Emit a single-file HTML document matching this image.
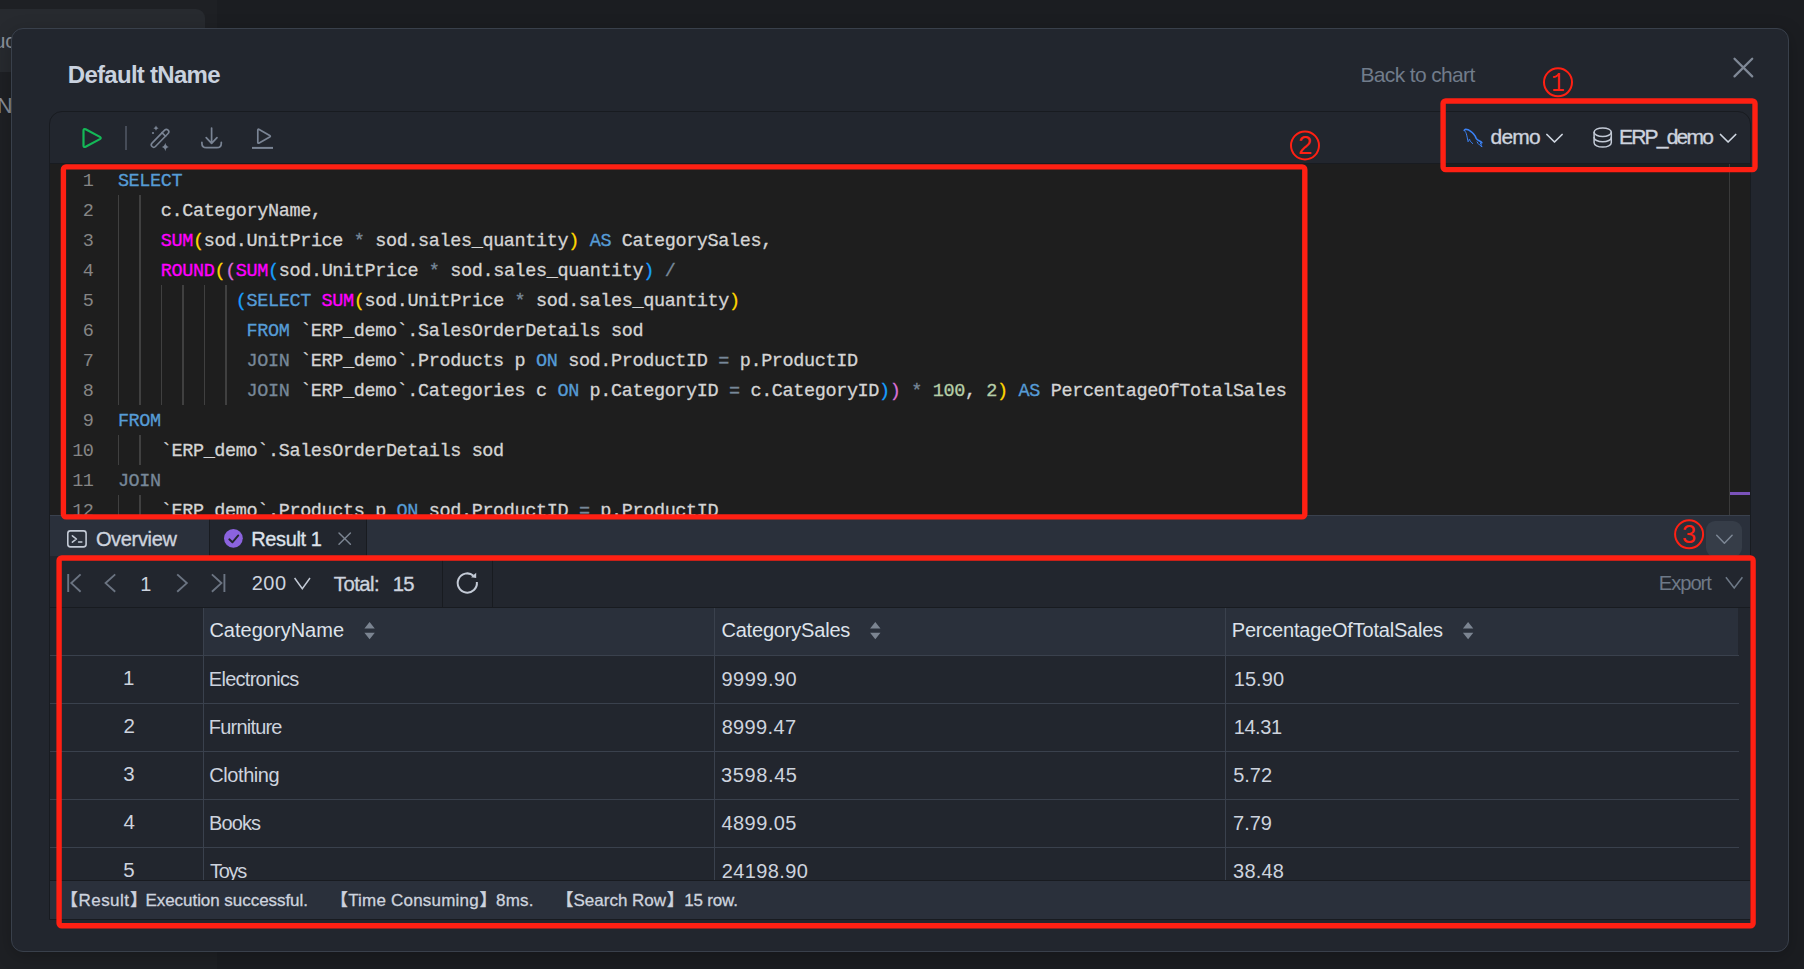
<!DOCTYPE html>
<html lang="en"><head><meta charset="utf-8"><title>Default tName</title>
<style>
*{margin:0;padding:0;box-sizing:border-box}
html,body{width:1804px;height:969px;overflow:hidden;background:#1e2024}
body{position:relative;font-family:"Liberation Sans", "Noto Sans CJK SC", sans-serif;}
.abs,.t,.ln,.cl,.ig,.hl,.vl,.rb,.circ{position:absolute}
.t{line-height:30px;white-space:pre;font-family:"Liberation Sans", "Noto Sans CJK SC", sans-serif}
.ln{left:50px;width:43.6px;text-align:right;height:30px;line-height:30px;font-family:"Liberation Mono", monospace;font-size:18.5px;letter-spacing:-0.382px;color:#858585;white-space:pre}
.cl{left:117.9px;height:30px;line-height:30px;font-family:"Liberation Mono", monospace;font-size:18.5px;letter-spacing:-0.382px;color:#d4d4d4;white-space:pre;-webkit-text-stroke:0.3px}
.ig{width:1.5px;height:30px;background:#404040}
.hl{height:1.5px;background:#3a414d}
.vl{width:1.5px;background:#3a414d}
.rb{border:5.4px solid #ff2013;border-radius:5px;z-index:10}
.circ{color:#ff2013;z-index:11;}
.bl{margin-left:-0.5em;margin-right:0.02em;-webkit-text-stroke:0.5px}.br{margin-right:-0.5em;margin-left:0.05em;-webkit-text-stroke:0.5px}
svg{position:absolute;overflow:visible}
</style></head>
<body>
<div class="abs" style="left:0;top:9px;width:205px;height:63px;background:#272a2f;border-top-right-radius:9px"></div>
<div class="abs" style="left:217px;top:0;width:1587px;height:969px;background:#1b1d21"></div>
<div class="t" style="left:-6.1px;top:25.7px;font-size:20.5px;color:#8c929b">uc</div>
<div class="t" style="left:-3.1px;top:91.1px;font-size:21.5px;color:#878d97">N</div>
<div class="abs" style="left:10.8px;top:28.2px;width:1778.2px;height:923.6px;background:#22262e;border:1.1px solid #39404b;border-radius:12px;box-shadow:0 4px 18px rgba(0,0,0,.22)"></div>
<div class="abs" id="panel" style="left:48.6px;top:110.6px;width:1702.4px;height:809.6px;background:#22262e;border:1.1px solid #181b20;border-radius:13px 13px 0 0;overflow:hidden"></div>
<div class="abs" id="editor" style="left:49.6px;top:163.7px;width:1700.6px;height:351.4px;background:#1e1e1e;overflow:hidden"></div>
<div class="abs" style="left:49.6px;top:162.8px;width:1700.6px;height:1.2px;background:#181b20"></div>
<div class="abs" style="left:1728.9px;top:164px;width:1.1px;height:351px;background:#3a3a3a"></div>
<div class="abs" style="left:1730px;top:492px;width:20.2px;height:2.8px;background:#7b53ba"></div>
<div class="abs" id="codewrap" style="left:0;top:0;width:1804px;height:515px;overflow:hidden"><div class="ln" style="top:166.6px">1</div>
<div class="cl" style="top:166.6px"><span style="color:#569cd6">SELECT</span></div>
<div class="ln" style="top:196.6px">2</div>
<div class="cl" style="top:196.6px"><span style="color:#d4d4d4">    c.CategoryName,</span></div>
<div class="ig" style="left:117.9px;top:195.0px"></div>
<div class="ig" style="left:139.3px;top:195.0px"></div>
<div class="ln" style="top:226.6px">3</div>
<div class="cl" style="top:226.6px"><span style="color:#d4d4d4">    </span><span style="color:#ff00ff">SUM</span><span style="color:#ffd700">(</span><span style="color:#d4d4d4">sod.UnitPrice </span><span style="color:#778899">*</span><span style="color:#d4d4d4"> sod.sales_quantity</span><span style="color:#ffd700">)</span><span style="color:#d4d4d4"> </span><span style="color:#569cd6">AS</span><span style="color:#d4d4d4"> CategorySales,</span></div>
<div class="ig" style="left:117.9px;top:225.0px"></div>
<div class="ig" style="left:139.3px;top:225.0px"></div>
<div class="ln" style="top:256.6px">4</div>
<div class="cl" style="top:256.6px"><span style="color:#d4d4d4">    </span><span style="color:#ff00ff">ROUND</span><span style="color:#ffd700">(</span><span style="color:#da70d6">(</span><span style="color:#ff00ff">SUM</span><span style="color:#179fff">(</span><span style="color:#d4d4d4">sod.UnitPrice </span><span style="color:#778899">*</span><span style="color:#d4d4d4"> sod.sales_quantity</span><span style="color:#179fff">)</span><span style="color:#d4d4d4"> </span><span style="color:#778899">/</span></div>
<div class="ig" style="left:117.9px;top:255.0px"></div>
<div class="ig" style="left:139.3px;top:255.0px"></div>
<div class="ln" style="top:286.6px">5</div>
<div class="cl" style="top:286.6px"><span style="color:#d4d4d4">           </span><span style="color:#179fff">(</span><span style="color:#569cd6">SELECT</span><span style="color:#d4d4d4"> </span><span style="color:#ff00ff">SUM</span><span style="color:#ffd700">(</span><span style="color:#d4d4d4">sod.UnitPrice </span><span style="color:#778899">*</span><span style="color:#d4d4d4"> sod.sales_quantity</span><span style="color:#ffd700">)</span></div>
<div class="ig" style="left:117.9px;top:285.0px"></div>
<div class="ig" style="left:139.3px;top:285.0px"></div>
<div class="ig" style="left:160.8px;top:285.0px"></div>
<div class="ig" style="left:182.2px;top:285.0px"></div>
<div class="ig" style="left:203.7px;top:285.0px"></div>
<div class="ig" style="left:225.1px;top:285.0px"></div>
<div class="ln" style="top:316.6px">6</div>
<div class="cl" style="top:316.6px"><span style="color:#d4d4d4">            </span><span style="color:#569cd6">FROM</span><span style="color:#d4d4d4"> `ERP_demo`.SalesOrderDetails sod</span></div>
<div class="ig" style="left:117.9px;top:315.0px"></div>
<div class="ig" style="left:139.3px;top:315.0px"></div>
<div class="ig" style="left:160.8px;top:315.0px"></div>
<div class="ig" style="left:182.2px;top:315.0px"></div>
<div class="ig" style="left:203.7px;top:315.0px"></div>
<div class="ig" style="left:225.1px;top:315.0px"></div>
<div class="ln" style="top:346.6px">7</div>
<div class="cl" style="top:346.6px"><span style="color:#d4d4d4">            </span><span style="color:#778899">JOIN</span><span style="color:#d4d4d4"> `ERP_demo`.Products p </span><span style="color:#569cd6">ON</span><span style="color:#d4d4d4"> sod.ProductID </span><span style="color:#778899">=</span><span style="color:#d4d4d4"> p.ProductID</span></div>
<div class="ig" style="left:117.9px;top:345.0px"></div>
<div class="ig" style="left:139.3px;top:345.0px"></div>
<div class="ig" style="left:160.8px;top:345.0px"></div>
<div class="ig" style="left:182.2px;top:345.0px"></div>
<div class="ig" style="left:203.7px;top:345.0px"></div>
<div class="ig" style="left:225.1px;top:345.0px"></div>
<div class="ln" style="top:376.6px">8</div>
<div class="cl" style="top:376.6px"><span style="color:#d4d4d4">            </span><span style="color:#778899">JOIN</span><span style="color:#d4d4d4"> `ERP_demo`.Categories c </span><span style="color:#569cd6">ON</span><span style="color:#d4d4d4"> p.CategoryID </span><span style="color:#778899">=</span><span style="color:#d4d4d4"> c.CategoryID</span><span style="color:#179fff">)</span><span style="color:#da70d6">)</span><span style="color:#d4d4d4"> </span><span style="color:#778899">*</span><span style="color:#d4d4d4"> </span><span style="color:#b5cea8">100</span><span style="color:#d4d4d4">, </span><span style="color:#b5cea8">2</span><span style="color:#ffd700">)</span><span style="color:#d4d4d4"> </span><span style="color:#569cd6">AS</span><span style="color:#d4d4d4"> PercentageOfTotalSales</span></div>
<div class="ig" style="left:117.9px;top:375.0px"></div>
<div class="ig" style="left:139.3px;top:375.0px"></div>
<div class="ig" style="left:160.8px;top:375.0px"></div>
<div class="ig" style="left:182.2px;top:375.0px"></div>
<div class="ig" style="left:203.7px;top:375.0px"></div>
<div class="ig" style="left:225.1px;top:375.0px"></div>
<div class="ln" style="top:406.6px">9</div>
<div class="cl" style="top:406.6px"><span style="color:#569cd6">FROM</span></div>
<div class="ln" style="top:436.6px">10</div>
<div class="cl" style="top:436.6px"><span style="color:#d4d4d4">    `ERP_demo`.SalesOrderDetails sod</span></div>
<div class="ig" style="left:117.9px;top:435.0px"></div>
<div class="ig" style="left:139.3px;top:435.0px"></div>
<div class="ln" style="top:466.6px">11</div>
<div class="cl" style="top:466.6px"><span style="color:#778899">JOIN</span></div>
<div class="ln" style="top:496.6px">12</div>
<div class="cl" style="top:496.6px"><span style="color:#d4d4d4">    `ERP_demo`.Products p </span><span style="color:#569cd6">ON</span><span style="color:#d4d4d4"> sod.ProductID </span><span style="color:#778899">=</span><span style="color:#d4d4d4"> p.ProductID</span></div>
<div class="ig" style="left:117.9px;top:495.0px"></div>
<div class="ig" style="left:139.3px;top:495.0px"></div></div>
<div class="abs" style="left:49.6px;top:515px;width:1700.6px;height:40.5px;background:#2a303b;border-top:1px solid #3a414d"></div>
<div class="abs" style="left:208.7px;top:516px;width:158.6px;height:39.7px;background:#22262e;border-left:1.3px solid #181b20;border-right:1.3px solid #181b20"></div>
<div class="abs" style="left:1706px;top:521px;width:36px;height:36px;background:#363d48;border-radius:9px"></div>
<div class="abs" style="left:441.6px;top:560px;width:1.3px;height:47px;background:#181b20"></div>
<div class="abs" style="left:491.6px;top:560px;width:1.3px;height:47px;background:#181b20"></div>
<div class="abs" style="left:203.2px;top:608px;width:1535.3px;height:47.5px;background:#2a303b"></div>
<div class="abs" style="left:49.6px;top:607px;width:1700.6px;height:1.4px;background:#181b20"></div>
<div class="hl" style="left:49.6px;top:654.7px;width:1689px"></div>
<div class="hl" style="left:49.6px;top:702.7px;width:1689px"></div>
<div class="hl" style="left:49.6px;top:750.6px;width:1689px"></div>
<div class="hl" style="left:49.6px;top:798.6px;width:1689px"></div>
<div class="hl" style="left:49.6px;top:846.6px;width:1689px"></div>
<div class="vl" style="left:202.5px;top:608px;height:273px"></div>
<div class="vl" style="left:713.7px;top:608px;height:273px"></div>
<div class="vl" style="left:1224.8px;top:608px;height:273px"></div>
<div class="abs" style="left:49.6px;top:880.3px;width:1700.6px;height:38.6px;background:#2a303b;border-top:1.3px solid #181b20;z-index:5"></div>
<div class="t" id="t0" style="left:67.85px;top:59.58px;font-size:24px;color:#c9d1de;font-weight:700;letter-spacing:-0.724px;">Default tName</div>
<div class="t" id="t1" style="left:1360.45px;top:59.62px;font-size:21px;color:#717c8b;font-weight:400;letter-spacing:-0.640px;">Back to chart</div>
<div class="t" id="t2" style="left:1490.55px;top:122.42px;font-size:21px;color:#cdd3de;font-weight:400;letter-spacing:-0.821px;-webkit-text-stroke:0.35px;">demo</div>
<div class="t" id="t3" style="left:1618.91px;top:122.42px;font-size:21px;color:#cdd3de;font-weight:400;letter-spacing:-1.776px;-webkit-text-stroke:0.35px;">ERP_demo</div>
<div class="t" id="t4" style="left:95.88px;top:523.97px;font-size:20px;color:#cdd3de;font-weight:400;letter-spacing:-0.325px;-webkit-text-stroke:0.35px;">Overview</div>
<div class="t" id="t5" style="left:251.24px;top:523.97px;font-size:20px;color:#dde2ea;font-weight:400;letter-spacing:-0.377px;-webkit-text-stroke:0.35px;">Result 1</div>
<div class="t" id="t6" style="left:140.13px;top:568.87px;font-size:20px;color:#cdd3de;font-weight:400;letter-spacing:0.000px;">1</div>
<div class="t" id="t7" style="left:251.72px;top:568.07px;font-size:20px;color:#cdd3de;font-weight:400;letter-spacing:0.524px;">200</div>
<div class="t" id="t8" style="left:333.87px;top:568.76px;font-size:20.3px;color:#cdd3de;font-weight:400;letter-spacing:-0.521px;-webkit-text-stroke:0.35px;">Total:</div>
<div class="t" id="t9" style="left:392.64px;top:568.76px;font-size:20.3px;color:#cdd3de;font-weight:400;letter-spacing:-0.729px;-webkit-text-stroke:0.35px;">15</div>
<div class="t" id="t10" style="left:1658.84px;top:568.00px;font-size:20.2px;color:#6e7987;font-weight:400;letter-spacing:-1.062px;">Export</div>
<div class="t" id="t11" style="left:209.40px;top:614.57px;font-size:20px;color:#dde2ea;font-weight:400;letter-spacing:0.015px;">CategoryName</div>
<div class="t" id="t12" style="left:721.40px;top:614.57px;font-size:20px;color:#dde2ea;font-weight:400;letter-spacing:-0.184px;">CategorySales</div>
<div class="t" id="t13" style="left:1231.84px;top:614.57px;font-size:20px;color:#dde2ea;font-weight:400;letter-spacing:-0.210px;">PercentageOfTotalSales</div>
<div class="t" id="t14" style="left:123.09px;top:662.79px;font-size:20.5px;color:#cdd3de;font-weight:400;letter-spacing:0.000px;">1</div>
<div class="t" id="t15" style="left:208.87px;top:663.77px;font-size:20px;color:#cdd3de;font-weight:400;letter-spacing:-0.738px;">Electronics</div>
<div class="t" id="t16" style="left:721.43px;top:663.77px;font-size:20px;color:#cdd3de;font-weight:400;letter-spacing:0.505px;">9999.90</div>
<div class="t" id="t17" style="left:1233.71px;top:663.77px;font-size:20px;color:#cdd3de;font-weight:400;letter-spacing:0.084px;">15.90</div>
<div class="t" id="t18" style="left:123.45px;top:710.76px;font-size:20.5px;color:#cdd3de;font-weight:400;letter-spacing:0.000px;">2</div>
<div class="t" id="t19" style="left:208.87px;top:711.74px;font-size:20px;color:#cdd3de;font-weight:400;letter-spacing:-0.809px;">Furniture</div>
<div class="t" id="t20" style="left:721.63px;top:711.74px;font-size:20px;color:#cdd3de;font-weight:400;letter-spacing:0.354px;">8999.47</div>
<div class="t" id="t21" style="left:1233.71px;top:711.74px;font-size:20px;color:#cdd3de;font-weight:400;letter-spacing:-0.422px;">14.31</div>
<div class="t" id="t22" style="left:123.34px;top:758.73px;font-size:20.5px;color:#cdd3de;font-weight:400;letter-spacing:0.000px;">3</div>
<div class="t" id="t23" style="left:209.33px;top:759.71px;font-size:20px;color:#cdd3de;font-weight:400;letter-spacing:-0.440px;">Clothing</div>
<div class="t" id="t24" style="left:721.06px;top:759.71px;font-size:20px;color:#cdd3de;font-weight:400;letter-spacing:0.607px;">3598.45</div>
<div class="t" id="t25" style="left:1233.18px;top:759.71px;font-size:20px;color:#cdd3de;font-weight:400;letter-spacing:0.001px;">5.72</div>
<div class="t" id="t26" style="left:123.50px;top:806.70px;font-size:20.5px;color:#cdd3de;font-weight:400;letter-spacing:0.000px;">4</div>
<div class="t" id="t27" style="left:209.01px;top:807.68px;font-size:20px;color:#cdd3de;font-weight:400;letter-spacing:-0.871px;">Books</div>
<div class="t" id="t28" style="left:721.44px;top:807.68px;font-size:20px;color:#cdd3de;font-weight:400;letter-spacing:0.451px;">4899.05</div>
<div class="t" id="t29" style="left:1233.02px;top:807.68px;font-size:20px;color:#cdd3de;font-weight:400;letter-spacing:-0.010px;">7.79</div>
<div class="t" id="t30" style="left:123.36px;top:854.67px;font-size:20.5px;color:#cdd3de;font-weight:400;letter-spacing:0.000px;">5</div>
<div class="t" id="t31" style="left:209.95px;top:855.65px;font-size:20px;color:#cdd3de;font-weight:400;letter-spacing:-1.247px;">Toys</div>
<div class="t" id="t32" style="left:721.65px;top:855.65px;font-size:20px;color:#cdd3de;font-weight:400;letter-spacing:0.410px;">24198.90</div>
<div class="t" id="t33" style="left:1233.11px;top:855.65px;font-size:20px;color:#cdd3de;font-weight:400;letter-spacing:0.180px;">38.48</div>
<div class="t" id="t34" style="left:69.24px;top:885.71px;font-size:17px;color:#cdd3de;font-weight:400;letter-spacing:0.453px;z-index:6;-webkit-text-stroke:0.3px;"><span class="bl">【</span>Result<span class="br">】</span></div>
<div class="t" id="t35" style="left:145.44px;top:885.71px;font-size:17px;color:#cdd3de;font-weight:400;letter-spacing:-0.046px;z-index:6;-webkit-text-stroke:0.3px;">Execution successful.</div>
<div class="t" id="t36" style="left:339.14px;top:885.71px;font-size:17px;color:#cdd3de;font-weight:400;letter-spacing:0.202px;z-index:6;-webkit-text-stroke:0.3px;"><span class="bl">【</span>Time Consuming<span class="br">】</span></div>
<div class="t" id="t37" style="left:495.91px;top:885.71px;font-size:17px;color:#cdd3de;font-weight:400;letter-spacing:0.284px;z-index:6;-webkit-text-stroke:0.3px;">8ms.</div>
<div class="t" id="t38" style="left:564.68px;top:885.71px;font-size:17px;color:#cdd3de;font-weight:400;letter-spacing:-0.002px;z-index:6;-webkit-text-stroke:0.3px;"><span class="bl">【</span>Search Row<span class="br">】</span></div>
<div class="t" id="t39" style="left:684.19px;top:885.71px;font-size:17px;color:#cdd3de;font-weight:400;letter-spacing:-0.165px;z-index:6;-webkit-text-stroke:0.3px;">15 row.</div>
<svg id="icons" width="1804" height="969" viewBox="0 0 1804 969" style="left:0;top:0;z-index:7" fill="none" stroke-linecap="round" stroke-linejoin="round">
<!-- toolbar: run -->
<path d="M83.5 130.6 Q83.5 128.3 85.6 129.3 L99.9 136.9 Q101.6 138 99.9 139.1 L85.6 146.7 Q83.5 147.7 83.5 145.4 Z" stroke="#14b857" stroke-width="2.2"/>
<rect x="125.1" y="126" width="1.8" height="24" fill="#4b525e" stroke="none"/>
<!-- wand -->
<g stroke="#7a8494" stroke-width="1.6">
<rect x="148.6" y="135.9" width="22.9" height="4.8" rx="2.4" transform="rotate(-45.7 160.05 138.3)"/>
<path d="M161.9 132.6 L165.6 136.3"/>
</g>
<g fill="#7a8494" stroke="none">
<path d="M156 125.6 Q156.4 127.8 158.6 128.2 Q156.4 128.6 156 130.8 Q155.6 128.6 153.4 128.2 Q155.6 127.8 156 125.6Z"/>
<circle cx="153" cy="133" r="1.1"/>
<path d="M165.3 142.8 Q165.9 146.4 168.9 147 Q165.9 147.6 165.3 151.2 Q164.7 147.6 161.7 147 Q164.7 146.4 165.3 142.8Z"/>
</g>
<!-- download -->
<g stroke="#7a8494" stroke-width="1.7">
<path d="M211.6 128 V143.3 M206.2 137.6 L211.6 143.4 L217 137.6"/>
<path d="M201.9 142.3 V143.2 Q201.9 147.7 206.4 147.7 H216.8 Q221.3 147.7 221.3 143.2 V142.3"/>
<!-- run line -->
<path d="M257.8 130.2 Q257.8 128.6 259.2 129.4 L269.7 135.4 Q271 136.2 269.7 137 L259.2 143 Q257.8 143.8 257.8 142.2 Z"/>
</g>
<rect x="252" y="146.9" width="21" height="2" fill="#7a8494" stroke="none"/>
<!-- close -->
<path d="M1734.5 58.7 L1752.2 76.4 M1752.2 58.7 L1734.5 76.4" stroke="#7f8896" stroke-width="2.3"/>
<!-- mysql dolphin -->
<path d="M1464.2 130.4 C1464.5 130.2 1465.0 129.3 1465.8 129.2 C1466.6 129.2 1467.9 129.7 1468.8 130.1 C1469.7 130.6 1470.6 131.1 1471.4 131.8 C1472.3 132.4 1473.0 133.2 1473.6 133.9 C1474.3 134.7 1474.8 135.6 1475.3 136.4 C1475.7 137.1 1475.9 138.0 1476.3 138.6 C1476.7 139.2 1477.0 139.5 1477.6 139.9 C1478.1 140.3 1478.9 140.6 1479.5 141.0 C1480.1 141.3 1480.8 141.7 1481.1 142.0 C1481.5 142.3 1481.7 142.7 1481.8 142.8" stroke="#3b82f6" stroke-width="1.6"/>
<path d="M1481.8 142.8 L1480.2 143.0 L1481.4 144.6 L1480.7 144.8 L1482.1 146.9 L1479.6 145.0 L1478.1 143.5 L1477.1 141.9 M1464.6 130.7 C1464.8 131.0 1465.5 131.7 1465.8 132.4 C1466.1 133.1 1466.5 134.2 1466.7 135.1 C1467.0 136.0 1467.1 137.0 1467.3 137.9 C1467.5 138.7 1467.6 139.5 1467.7 140.2 C1467.8 140.8 1467.9 141.8 1468.1 141.8 C1468.3 141.8 1468.7 140.7 1468.9 140.3 C1469.1 139.8 1469.3 139.1 1469.4 139.1 C1469.6 139.1 1469.7 139.8 1469.9 140.3 C1470.1 140.7 1470.3 141.2 1470.8 141.8 C1471.2 142.3 1472.4 143.2 1472.7 143.5" stroke="#3b82f6" stroke-width="1"/>
<!-- chevrons top right -->
<g stroke="#cfd6e1" stroke-width="1.7">
<path d="M1546.9 134.5 L1554.5 142 L1562.1 134.5"/>
<path d="M1720.5 134.5 L1728.1 142 L1735.7 134.5"/>
</g>
<!-- db icon -->
<g stroke="#c3cad6" stroke-width="1.5">
<ellipse cx="1602.7" cy="132.2" rx="8.6" ry="4.3"/>
<path d="M1594.1 132.2 V142.8 A8.6 4.3 0 0 0 1611.3 142.8 V132.2"/>
<path d="M1594.1 137.5 A8.6 4.3 0 0 0 1611.3 137.5"/>
</g>
<!-- terminal icon -->
<g stroke="#c3cad6" stroke-width="1.6">
<rect x="67.8" y="530.9" width="18.3" height="16" rx="2.6"/>
<path d="M72.4 535.8 L76.4 539 L72.4 542.2 M78.6 542 H81.8"/>
</g>
<!-- check circle -->
<circle cx="233.4" cy="538.3" r="9.4" fill="#8b63df" stroke="none"/>
<path d="M229.3 539.3 L232.4 542.3 L238.3 535.4" stroke="#22262e" stroke-width="1.9"/>
<!-- tab close -->
<path d="M339 533 L350.4 544.2 M350.4 533 L339 544.2" stroke="#7b8491" stroke-width="1.5"/>
<!-- collapse chevron -->
<path d="M1716.7 535.3 L1724.4 543.2 L1732.1 535.3" stroke="#7d8795" stroke-width="1.5"/>
<!-- pagination -->
<g stroke="#6b7482" stroke-width="1.9" stroke-linecap="butt" stroke-linejoin="miter">
<path d="M68.2 574 V592 M80.6 574.4 L71.3 583.1 L80.6 591.8"/>
<path d="M115.2 574.4 L105.6 583.1 L115.2 591.8"/>
<path d="M177.2 574.4 L186.8 583.1 L177.2 591.8"/>
<path d="M211.9 574.4 L221.4 583.1 L211.9 591.8 M224.4 574 V592"/>
</g>
<path d="M294.6 578 L302.3 588.6 L310 578" stroke="#c3cad6" stroke-width="1.5" stroke-linecap="butt" stroke-linejoin="miter"/>
<!-- refresh -->
<path d="M476.85 582 A9.6 9.6 0 1 1 473.47 575.65" stroke="#c3cad6" stroke-width="2" stroke-linecap="butt"/>
<path d="M476.2 572.8 L476.2 578 L471 577.2Z" fill="#c3cad6" stroke="none"/>
<!-- export chevron -->
<path d="M1725.9 577.2 L1734.2 588 L1742.4 577.2" stroke="#6e7987" stroke-width="1.5" stroke-linecap="butt" stroke-linejoin="miter"/>
<!-- sort icons -->
<g fill="#7b8491" stroke="none">
<path d="M364.4 628.6 L369.6 622 L374.8 628.6Z M364.4 632.8 L369.6 639.2 L374.8 632.8Z"/>
<path d="M870.1 628.6 L875.3 622 L880.5 628.6Z M870.1 632.8 L875.3 639.2 L880.5 632.8Z"/>
<path d="M1462.9 628.6 L1468.1 622 L1473.3 628.6Z M1462.9 632.8 L1468.1 639.2 L1473.3 632.8Z"/>
</g>
</svg>

<svg id="anno" width="1804" height="969" viewBox="0 0 1804 969" style="left:0;top:0;z-index:10">
<rect x="1443.10" y="101.00" width="311.90" height="68.60" rx="2.6" fill="none" stroke="#ff2013" stroke-width="5.4"/>
<rect x="63.40" y="166.90" width="1241.40" height="350.00" rx="2.6" fill="none" stroke="#ff2013" stroke-width="5.4"/>
<rect x="59.10" y="558.00" width="1694.00" height="367.80" rx="2.6" fill="none" stroke="#ff2013" stroke-width="5.4"/>
</svg>
<svg id="marks" width="1804" height="969" viewBox="0 0 1804 969" style="left:0;top:0;z-index:11">
<circle cx="1558" cy="82.3" r="14" fill="none" stroke="#ff2013" stroke-width="2"/><text transform="translate(1558 90.9) scale(0.82 1)" x="0" y="0" text-anchor="middle" font-family='"Liberation Mono", monospace' font-size="27" fill="#ff2013">1</text>
<circle cx="1305" cy="145.5" r="14" fill="none" stroke="#ff2013" stroke-width="2"/><text transform="translate(1305 154.1) scale(1.0 1)" x="0" y="0" text-anchor="middle" font-family='"Liberation Sans", sans-serif' font-size="25.5" fill="#ff2013">2</text>
<circle cx="1689.1" cy="534.3" r="14" fill="none" stroke="#ff2013" stroke-width="2"/><text transform="translate(1689.1 542.7) scale(1.0 1)" x="0" y="0" text-anchor="middle" font-family='"Liberation Sans", sans-serif' font-size="25.5" fill="#ff2013">3</text>
</svg>
</body></html>
